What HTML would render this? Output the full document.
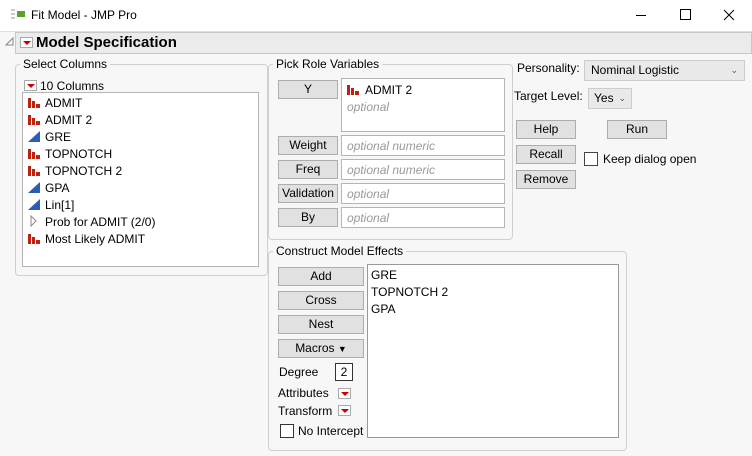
<!DOCTYPE html>
<html><head><style>
*{box-sizing:border-box;margin:0;padding:0}
body{width:752px;height:456px;background:#f7f7f7;font-family:"Liberation Sans",sans-serif;font-size:12px;color:#000;position:relative;overflow:hidden}
.a{position:absolute}
.btn{position:absolute;background:#e1e1e1;border:1px solid #adadad;text-align:center;line-height:17px;font-size:12px}
.box{position:absolute;background:#fff;border:1px solid #b5b5b5}
.grp{position:absolute;border:1px solid #d0d0d0;border-radius:4px}
.lg{position:absolute;background:#f7f7f7;padding:0 3px;top:-8px;left:4px;line-height:14px}
.opt{color:#999;font-style:italic;position:absolute;left:5px;line-height:20px}
.dd{position:absolute;width:13px;height:11px;border:1px solid #aaa;background:#fff}
.dd:after{content:"";position:absolute;left:2px;top:3px;border-left:4px solid transparent;border-right:4px solid transparent;border-top:4px solid #c00}
.it{position:absolute;left:4px;height:17px;line-height:17px;white-space:nowrap}
.it svg{vertical-align:-2px;margin-right:4px}
.cb{position:absolute;width:14px;height:14px;border:1px solid #333;background:#fff}
</style></head><body>
<svg width="0" height="0" style="position:absolute"><defs>
<g id="bar"><rect x="1" y="2" width="3" height="10" fill="#c02010"/><rect x="5" y="5" width="3" height="7" fill="#c02010"/><rect x="9" y="8" width="4" height="4" fill="#c02010"/></g>
<g id="tri"><path d="M1 12L13 1L13 12Z" fill="#2a5cb8"/></g>
</defs></svg>
<div class="a" style="left:0;top:0;width:752px;height:31px;background:#fff"></div>
<svg class="a" style="left:10px;top:8px" width="18" height="12"><path d="M1 2h4M1 6h4M1 10h4" stroke="#8899aa"/><rect x="7" y="3" width="8" height="6" fill="#5aa02c"/></svg>
<div class="a" style="left:31px;top:8px;font-size:12px">Fit Model - JMP Pro</div>
<svg class="a" style="left:620px;top:8px" width="120" height="14"><path d="M16 7.5h10" stroke="#000"/><rect x="60.5" y="1.5" width="10" height="10" fill="none" stroke="#000"/><path d="M104 2l10 10M114 2l-10 10" stroke="#000"/></svg>
<div class="a" style="left:0;top:31px;width:752px;height:1px;background:#e0e0e0"></div>
<svg class="a" style="left:5px;top:37px" width="10" height="10"><path d="M8 1L8 8L1 8Z" fill="none" stroke="#888"/></svg>
<div class="a" style="left:15px;top:32px;width:737px;height:22px;background:#ebebeb;border:1px solid #c8c8c8"></div>
<span class="dd" style="left:20px;top:37px"></span>
<div class="a" style="left:36px;top:34px;font-size:15px;font-weight:bold;line-height:18px">Model Specification</div>

<div class="grp" style="left:15px;top:64px;width:253px;height:212px"><span class="lg">Select Columns</span></div>
<span class="dd" style="left:24px;top:80px"></span>
<div class="a" style="left:40px;top:79px">10 Columns</div>
<div class="box" style="left:22px;top:92px;width:237px;height:175px">
<div class="it" style="top:2px"><svg width="14" height="13"><use href="#bar"/></svg>ADMIT</div>
<div class="it" style="top:19px"><svg width="14" height="13"><use href="#bar"/></svg>ADMIT 2</div>
<div class="it" style="top:36px"><svg width="14" height="13"><use href="#tri"/></svg>GRE</div>
<div class="it" style="top:53px"><svg width="14" height="13"><use href="#bar"/></svg>TOPNOTCH</div>
<div class="it" style="top:70px"><svg width="14" height="13"><use href="#bar"/></svg>TOPNOTCH 2</div>
<div class="it" style="top:87px"><svg width="14" height="13"><use href="#tri"/></svg>GPA</div>
<div class="it" style="top:104px"><svg width="14" height="13"><use href="#tri"/></svg>Lin[1]</div>
<div class="it" style="top:121px"><svg width="14" height="13"><path d="M4 1L9 6L4 11Z" fill="none" stroke="#888"/></svg>Prob for ADMIT (2/0)</div>
<div class="it" style="top:138px"><svg width="14" height="13"><use href="#bar"/></svg>Most Likely ADMIT</div>
</div>

<div class="grp" style="left:268px;top:64px;width:245px;height:176px"><span class="lg">Pick Role Variables</span></div>
<div class="btn" style="left:278px;top:80px;width:60px;height:19px">Y</div>
<div class="box" style="left:341px;top:78px;width:164px;height:54px">
<div class="a" style="left:4px;top:3px;line-height:16px;white-space:nowrap"><svg width="14" height="13" style="vertical-align:-2px;margin-right:5px"><use href="#bar"/></svg>ADMIT 2</div>
<div class="opt" style="top:18px">optional</div></div>
<div class="btn" style="left:278px;top:136px;width:60px;height:19px">Weight</div>
<div class="box" style="left:341px;top:135px;width:164px;height:21px"><div class="opt">optional numeric</div></div>
<div class="btn" style="left:278px;top:160px;width:60px;height:19px">Freq</div>
<div class="box" style="left:341px;top:159px;width:164px;height:21px"><div class="opt">optional numeric</div></div>
<div class="btn" style="left:278px;top:184px;width:60px;height:19px">Validation</div>
<div class="box" style="left:341px;top:183px;width:164px;height:21px"><div class="opt">optional</div></div>
<div class="btn" style="left:278px;top:208px;width:60px;height:19px">By</div>
<div class="box" style="left:341px;top:207px;width:164px;height:21px"><div class="opt">optional</div></div>

<div class="a" style="left:517px;top:61px">Personality:</div>
<div class="a" style="left:584px;top:60px;width:161px;height:21px;background:#e9e9e9;border:1px solid #ccc;padding-left:6px;line-height:19px">Nominal Logistic<span style="position:absolute;right:6px;font-size:9px;color:#555">&#8964;</span></div>
<div class="a" style="left:514px;top:89px">Target Level:</div>
<div class="a" style="left:588px;top:88px;width:44px;height:21px;background:#e9e9e9;border:1px solid #ccc;padding-left:5px;line-height:19px">Yes<span style="position:absolute;right:5px;font-size:9px;color:#555">&#8964;</span></div>
<div class="btn" style="left:516px;top:120px;width:60px;height:19px">Help</div>
<div class="btn" style="left:607px;top:120px;width:60px;height:19px">Run</div>
<div class="btn" style="left:516px;top:145px;width:60px;height:19px">Recall</div>
<div class="cb" style="left:584px;top:152px;border-color:#444"></div>
<div class="a" style="left:603px;top:152px">Keep dialog open</div>
<div class="btn" style="left:516px;top:170px;width:60px;height:19px">Remove</div>

<div class="grp" style="left:268px;top:251px;width:359px;height:200px"><span class="lg">Construct Model Effects</span></div>
<div class="btn" style="left:278px;top:267px;width:86px;height:19px">Add</div>
<div class="btn" style="left:278px;top:291px;width:86px;height:19px">Cross</div>
<div class="btn" style="left:278px;top:315px;width:86px;height:19px">Nest</div>
<div class="btn" style="left:278px;top:339px;width:86px;height:19px">Macros <span style="font-size:9px">&#9660;</span></div>
<div class="a" style="left:279px;top:365px">Degree</div>
<div class="a" style="left:335px;top:363px;width:18px;height:18px;background:#fff;border:1px solid #333;text-align:center;line-height:16px">2</div>
<div class="a" style="left:278px;top:386px">Attributes</div>
<span class="dd" style="left:338px;top:388px"></span>
<div class="a" style="left:278px;top:404px">Transform</div>
<span class="dd" style="left:338px;top:405px"></span>
<div class="cb" style="left:280px;top:424px"></div>
<div class="a" style="left:298px;top:424px">No Intercept</div>
<div class="box" style="left:367px;top:264px;width:252px;height:174px;border-color:#999">
<div class="a" style="left:3px;top:2px;line-height:17px">GRE<br>TOPNOTCH 2<br>GPA</div></div>
</body></html>
